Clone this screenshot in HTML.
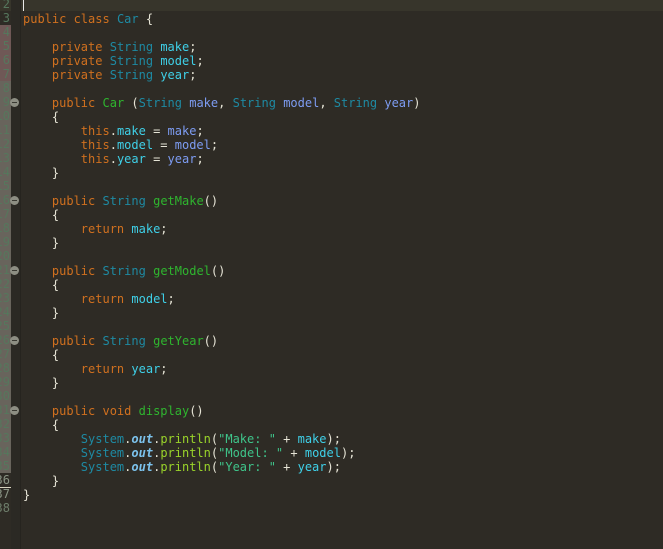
<!DOCTYPE html>
<html><head><meta charset="utf-8"><style>
html,body{margin:0;padding:0;width:663px;height:549px;overflow:hidden;background:#2e2b25;}
.cur{position:absolute;left:0;top:0;width:663px;height:11px;background:#37352b;}
.g{position:absolute;left:0;width:11px;height:14px;overflow:hidden;font:12px/14px "DejaVu Sans Mono",monospace;color:#56775d;text-align:right;}
.g span{position:absolute;right:1px;top:0;white-space:nowrap;}
.red{background:#6f5856;}
.gry{background:#68645c;}
.sep{position:absolute;left:20px;top:0;width:1px;height:549px;background:#26241f;}
.gut{position:absolute;left:11px;top:0;width:9px;height:549px;background:#2b2924;}
.fold{position:absolute;left:10px;width:9px;height:9px;border-radius:50%;background:#8d8e83;}
.fold:after{content:"";position:absolute;left:2px;top:4px;width:5px;height:1px;background:#3a3a33;}
pre{position:absolute;left:23px;top:-16px;margin:0;font:12px/14px "DejaVu Sans Mono",monospace;color:#e6e4d6;}
.k{color:#d0701f}.t{color:#1e8aa3}.f{color:#3fd0e8}.p{color:#7d9cf2}.m{color:#2fb52f}.s{color:#3fc48a}.y{color:#9ad42a}.o{color:#7cc2ec;font-weight:bold;font-style:italic}
.caret{position:absolute;left:23px;top:0;width:1px;height:11px;background:#e8e8e8;}
.ul{position:absolute;left:0;top:487px;width:11px;height:1px;background:#d8d4c0;}
</style></head><body>
<div class="cur"></div>
<div class="gut"></div>
<div class="sep"></div>
<div class="caret"></div>
<pre>

 
<span class="k">public class</span> <span class="t">Car</span> {

    <span class="k">private</span> <span class="t">String</span> <span class="f">make</span>;
    <span class="k">private</span> <span class="t">String</span> <span class="f">model</span>;
    <span class="k">private</span> <span class="t">String</span> <span class="f">year</span>;

    <span class="k">public</span> <span class="m">Car</span> (<span class="t">String</span> <span class="p">make</span>, <span class="t">String</span> <span class="p">model</span>, <span class="t">String</span> <span class="p">year</span>)
    {
        <span class="k">this</span>.<span class="f">make</span> = <span class="p">make</span>;
        <span class="k">this</span>.<span class="f">model</span> = <span class="p">model</span>;
        <span class="k">this</span>.<span class="f">year</span> = <span class="p">year</span>;
    }

    <span class="k">public</span> <span class="t">String</span> <span class="m">getMake</span>()
    {
        <span class="k">return</span> <span class="f">make</span>;
    }

    <span class="k">public</span> <span class="t">String</span> <span class="m">getModel</span>()
    {
        <span class="k">return</span> <span class="f">model</span>;
    }

    <span class="k">public</span> <span class="t">String</span> <span class="m">getYear</span>()
    {
        <span class="k">return</span> <span class="f">year</span>;
    }

    <span class="k">public void</span> <span class="m">display</span>()
    {
        <span class="t">System</span>.<span class="o">out</span>.<span class="y">println</span>(<span class="s">"Make: "</span> + <span class="f">make</span>);
        <span class="t">System</span>.<span class="o">out</span>.<span class="y">println</span>(<span class="s">"Model: "</span> + <span class="f">model</span>);
        <span class="t">System</span>.<span class="o">out</span>.<span class="y">println</span>(<span class="s">"Year: "</span> + <span class="f">year</span>);
    }
}
</pre>
<div class="g" style="top:-3px"><span>2</span></div>
<div class="g" style="top:11px"><span>3</span></div>
<div class="g red" style="top:25px"><span>4</span></div>
<div class="g red" style="top:39px"><span>5</span></div>
<div class="g red" style="top:53px"><span>6</span></div>
<div class="g red" style="top:67px"><span>7</span></div>
<div class="g gry" style="top:81px"><span>8</span></div>
<div class="g gry" style="top:95px"><span>9</span></div>
<div class="g gry" style="top:109px"><span>10</span></div>
<div class="g gry" style="top:123px"><span>11</span></div>
<div class="g gry" style="top:137px"><span>12</span></div>
<div class="g gry" style="top:151px"><span>13</span></div>
<div class="g gry" style="top:165px"><span>14</span></div>
<div class="g gry" style="top:179px"><span>15</span></div>
<div class="g gry" style="top:193px"><span>16</span></div>
<div class="g gry" style="top:207px"><span>17</span></div>
<div class="g gry" style="top:221px"><span>18</span></div>
<div class="g gry" style="top:235px"><span>19</span></div>
<div class="g gry" style="top:249px"><span>20</span></div>
<div class="g gry" style="top:263px"><span>21</span></div>
<div class="g gry" style="top:277px"><span>22</span></div>
<div class="g gry" style="top:291px"><span>23</span></div>
<div class="g gry" style="top:305px"><span>24</span></div>
<div class="g gry" style="top:319px"><span>25</span></div>
<div class="g gry" style="top:333px"><span>26</span></div>
<div class="g gry" style="top:347px"><span>27</span></div>
<div class="g gry" style="top:361px"><span>28</span></div>
<div class="g gry" style="top:375px"><span>29</span></div>
<div class="g gry" style="top:389px"><span>30</span></div>
<div class="g gry" style="top:403px"><span>31</span></div>
<div class="g gry" style="top:417px"><span>32</span></div>
<div class="g gry" style="top:431px"><span>33</span></div>
<div class="g gry" style="top:445px"><span>34</span></div>
<div class="g gry" style="top:459px"><span>35</span></div>
<div class="g" style="top:473px;color:#8a9484"><span>36</span></div>
<div class="g" style="top:487px;color:#8a9484"><span>37</span></div>
<div class="g" style="top:501px;color:#6d7d6a"><span>38</span></div>
<div class="ul"></div>
<div class="fold" style="top:98px"></div>
<div class="fold" style="top:196px"></div>
<div class="fold" style="top:266px"></div>
<div class="fold" style="top:336px"></div>
<div class="fold" style="top:406px"></div>
</body></html>
